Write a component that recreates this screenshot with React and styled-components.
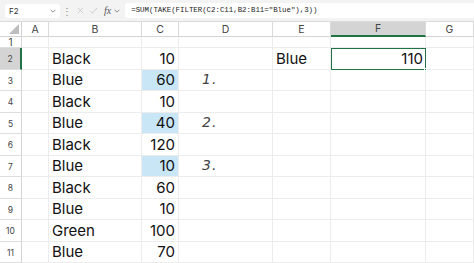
import React from 'react'
import styled, { createGlobalStyle } from 'styled-components'

const GlobalStyle = createGlobalStyle`
    html, body {
        margin: 0;
        padding: 0;
        background: #ffffff;
        overflow: hidden;
    }
    * {
        box-sizing: border-box;
    }
`

const columns = ['A', 'B', 'C', 'D', 'E', 'F', 'G']

const rows = [
    { name: 'Black', value: 10 },
    { name: 'Blue', value: 60, hit: true, note: '1.' },
    { name: 'Black', value: 10 },
    { name: 'Blue', value: 40, hit: true, note: '2.' },
    { name: 'Black', value: 120 },
    { name: 'Blue', value: 10, hit: true, note: '3.' },
    { name: 'Black', value: 60 },
    { name: 'Blue', value: 10 },
    { name: 'Green', value: 100 },
    { name: 'Blue', value: 70 },
]

const App = () => {
    return (
        <Page>
            <GlobalStyle />
            <FormulaBar>
                <NameBox>
                    <span>F2</span>
                    <Chevron viewBox="0 0 10 10"><path d="M2 3.5 L5 6.5 L8 3.5" /></Chevron>
                </NameBox>
                <Dots>⋮</Dots>
                <BarIcon viewBox="0 0 10 10"><path d="M2 2 L8 8 M8 2 L2 8" /></BarIcon>
                <BarIcon viewBox="0 0 10 10"><path d="M1.5 5.5 L4 8 L9 2" /></BarIcon>
                <Fx>fx</Fx>
                <Chevron viewBox="0 0 10 10"><path d="M2 3.5 L5 6.5 L8 3.5" /></Chevron>
                <FormulaInput>=SUM(TAKE(FILTER(C2:C11,B2:B11="Blue"),3))</FormulaInput>
            </FormulaBar>

            <Sheet>
                <Corner><CornerTriangle /></Corner>
                {columns.map(c => (
                    <ColHeader key={c} selected={c === 'F'}>{c}</ColHeader>
                ))}

                <RowHeader short>1</RowHeader>
                {columns.map(c => <Cell key={'1' + c} />)}

                {rows.map((row, i) => {
                    const n = i + 2
                    return (
                        <React.Fragment key={n}>
                            <RowHeader selected={n === 2}>{n}</RowHeader>
                            <Cell />
                            <Cell>{row.name}</Cell>
                            <Cell align="right" hit={row.hit}>{row.value}</Cell>
                            <Cell>{row.note ? <Note>{row.note}</Note> : null}</Cell>
                            <Cell>{n === 2 ? 'Blue' : ''}</Cell>
                            {n === 2
                                ? <Cell align="right" active>110<Handle /></Cell>
                                : <Cell />}
                            <Cell />
                        </React.Fragment>
                    )
                })}
            </Sheet>
        </Page>
    )
}

const Page = styled.div`
    width: 474px;
    height: 263px;
    overflow: hidden;
    font-family: Inter, "Noto Sans", sans-serif;
    color: #111;
`

const FormulaBar = styled.div`
    display: flex;
    align-items: center;
    height: 22px;
    padding: 3px 0 3px 5px;
    background: #f3f3f3;
    border-bottom: 1px solid #dadada;
`

const NameBox = styled.div`
    display: flex;
    align-items: center;
    justify-content: space-between;
    width: 55px;
    height: 14px;
    padding: 0 3px 0 4px;
    background: #ffffff;
    border-radius: 3px;
    font-size: 8px;
    color: #333;
`

const Chevron = styled.svg`
    width: 8px;
    height: 8px;
    fill: none;
    stroke: #777;
    stroke-width: 1.1;
`

const Dots = styled.span`
    width: 12px;
    margin-left: 1px;
    font-size: 10px;
    color: #888;
    text-align: center;
`

const BarIcon = styled.svg`
    width: 9px;
    height: 9px;
    margin: 0 1px 0 3px;
    fill: none;
    stroke: #c4c4c4;
    stroke-width: 0.9;
`

const Fx = styled.span`
    margin: 0 2px 0 5px;
    font-family: "Liberation Serif", serif;
    font-style: italic;
    font-size: 10px;
    color: #555;
`

const FormulaInput = styled.div`
    flex: 1;
    height: 15px;
    margin-left: 4px;
    padding-left: 6px;
    background: #ffffff;
    border-radius: 3px 0 0 3px;
    font-family: "Liberation Mono", monospace;
    font-size: 7.4px;
    line-height: 15px;
    color: #222;
    white-space: nowrap;
`

const Sheet = styled.div`
    display: grid;
    grid-template-columns: 22px 27px 93px 37px 94px 58px 95px 48px;
    grid-template-rows: 15px 11px repeat(10, 21.5px);
`

const Corner = styled.div`
    position: relative;
    border-right: 1px solid #d4d4d4;
    border-bottom: 1px solid #d4d4d4;
`

const CornerTriangle = styled.div`
    position: absolute;
    right: 2px;
    bottom: 2px;
    width: 0;
    height: 0;
    border-left: 10px solid transparent;
    border-bottom: 10px solid #bdbdbd;
`

const ColHeader = styled.div`
    display: flex;
    align-items: center;
    justify-content: center;
    font-size: 10.5px;
    color: #444;
    background: ${p => (p.selected ? '#d4d4d4' : '#ffffff')};
    border-right: 1px solid #d9d9d9;
    border-bottom: ${p => (p.selected ? '2px solid #217346' : '1px solid #d4d4d4')};
`

const RowHeader = styled.div`
    display: flex;
    align-items: center;
    justify-content: center;
    padding-top: ${p => (p.short ? '0' : '2px')};
    font-size: ${p => (p.short ? '10px' : '8.5px')};
    color: #444;
    background: ${p => (p.selected ? '#d4d4d4' : '#ffffff')};
    border-right: ${p => (p.selected ? '2px solid #217346' : '1px solid #d4d4d4')};
    border-bottom: 1px solid #dedede;
`

const Cell = styled.div`
    position: relative;
    display: flex;
    align-items: flex-end;
    justify-content: ${p => (p.align === 'right' ? 'flex-end' : 'flex-start')};
    padding: 0 3px 1px 3px;
    font-size: 15px;
    line-height: 18px;
    background: ${p => (p.hit ? '#c8e6f6' : '#ffffff')};
    border-right: 1px solid #ececec;
    border-bottom: 1px solid #ececec;
    ${p => p.active && `
        border: 1.5px solid #217346;
        padding-right: 2px;
    `}
`

const Handle = styled.span`
    position: absolute;
    right: -4px;
    bottom: -4px;
    width: 5px;
    height: 5px;
    background: #217346;
    border: 1px solid #ffffff;
`

const Note = styled.span`
    padding-left: 20px;
    padding-bottom: 1px;
    font-family: "DejaVu Sans", sans-serif;
    font-weight: 200;
    font-style: italic;
    font-size: 14px;
    color: #444;
    letter-spacing: 1px;
`

export default App
